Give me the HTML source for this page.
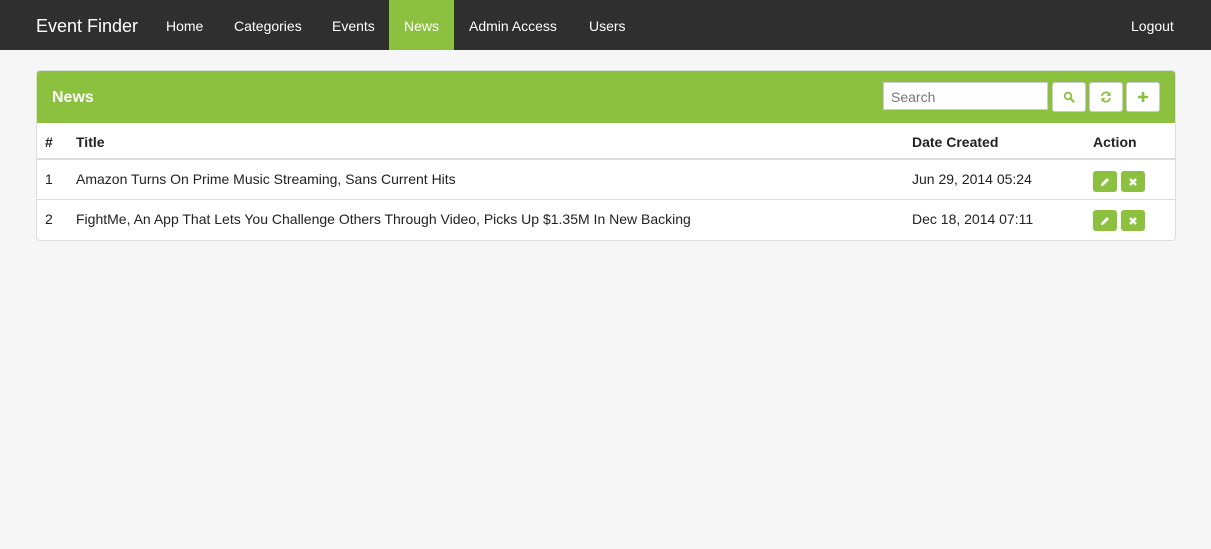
<!DOCTYPE html>
<html><head><meta charset="utf-8"><style>
*{box-sizing:border-box;margin:0;padding:0}
body{width:1211px;height:549px;background:#f6f6f6;font-family:"Liberation Sans",Helvetica,Arial,sans-serif;font-size:14px;color:#222;position:relative;overflow:hidden}
.nav{position:absolute;left:0;top:0;width:1211px;height:50px;background:#2f2f2f}
.nav a{position:absolute;top:0;height:50px;line-height:52px;color:#fff;font-size:14px;text-decoration:none}
.brand{font-size:18px!important;left:36px}
.act{background:#8bc13f;padding:0 15px}
.panel{position:absolute;left:36px;top:70px;width:1140px;height:171px;background:#fff;border:1px solid #ddd;border-radius:4px;overflow:hidden}
.ph{height:52px;background:#8bc13f;position:relative}
.ph h3{position:absolute;left:15px;top:18px;color:#fff;font-size:16px;font-weight:bold}
.search{position:absolute;left:846px;top:11px;width:165px;height:28px;background:#fff;border:1px solid #ccc;font-size:14px;color:#777;padding:6px 7px}
.btn{position:absolute;top:11px;width:34px;height:30px;background:#fff;border:1px solid #ccc;border-radius:3px;display:flex;align-items:center;justify-content:center}
.row{position:absolute;left:0;width:1140px;font-size:14px}
.row span{position:absolute}
.sb{position:absolute;width:24px;height:21px;background:#8bc13f;border-radius:3px;display:flex;align-items:center;justify-content:center}
</style></head><body>
<div class="nav">
<a class="brand">Event Finder</a>
<a style="left:166px">Home</a>
<a style="left:234px">Categories</a>
<a style="left:332px">Events</a>
<a class="act" style="left:389px">News</a>
<a style="left:469px">Admin Access</a>
<a style="left:589px">Users</a>
<a style="left:1131px">Logout</a>
</div>
<div class="panel">
<div class="ph"><h3>News</h3>
<div class="search">Search</div>
<div class="btn" style="left:1015px"><svg width="12" height="12" viewBox="0 0 12 12"><circle cx="5" cy="5" r="3.3" fill="none" stroke="#8bc13f" stroke-width="1.8"/><path d="M7.5 7.5L10.5 10.5" stroke="#8bc13f" stroke-width="2.2" stroke-linecap="round"/></svg></div>
<div class="btn" style="left:1052px"><svg width="12" height="12" viewBox="0 0 12 12"><path d="M2 5A4 4 0 0 1 9.5 3.5M10 7A4 4 0 0 1 2.5 8.5" fill="none" stroke="#8bc13f" stroke-width="1.8"/><path d="M10.5 1v4h-4zM1.5 11V7h4z" fill="#8bc13f"/></svg></div>
<div class="btn" style="left:1089px"><svg width="12" height="12" viewBox="0 0 12 12"><path d="M6 1v10M1 6h10" stroke="#8bc13f" stroke-width="2.6"/></svg></div>
</div>
<div class="row" style="top:52px;height:37px;border-bottom:2px solid #ddd;font-weight:bold">
<span style="left:8px;top:11px">#</span><span style="left:39px;top:11px">Title</span><span style="left:875px;top:11px">Date Created</span><span style="left:1056px;top:11px">Action</span></div>
<div class="row" style="top:89px;height:40px;border-bottom:1px solid #ddd">
<span style="left:8px;top:11px">1</span><span style="left:39px;top:11px">Amazon Turns On Prime Music Streaming, Sans Current Hits</span><span style="left:875px;top:11px">Jun 29, 2014 05:24</span>
<div class="sb" style="left:1056px;top:11px"><svg width="10" height="10" viewBox="0 0 10 10"><path d="M1 9l0.5-2.5L7 1l2 2-5.5 5.5z" fill="#fff"/></svg></div>
<div class="sb" style="left:1084px;top:11px"><svg width="10" height="10" viewBox="0 0 10 10"><path d="M2 2l6 6M8 2l-6 6" stroke="#fff" stroke-width="2.4"/></svg></div></div>
<div class="row" style="top:129px;height:40px">
<span style="left:8px;top:11px">2</span><span style="left:39px;top:11px">FightMe, An App That Lets You Challenge Others Through Video, Picks Up $1.35M In New Backing</span><span style="left:875px;top:11px">Dec 18, 2014 07:11</span>
<div class="sb" style="left:1056px;top:10px"><svg width="10" height="10" viewBox="0 0 10 10"><path d="M1 9l0.5-2.5L7 1l2 2-5.5 5.5z" fill="#fff"/></svg></div>
<div class="sb" style="left:1084px;top:10px"><svg width="10" height="10" viewBox="0 0 10 10"><path d="M2 2l6 6M8 2l-6 6" stroke="#fff" stroke-width="2.4"/></svg></div></div>
</div>
</body></html>
